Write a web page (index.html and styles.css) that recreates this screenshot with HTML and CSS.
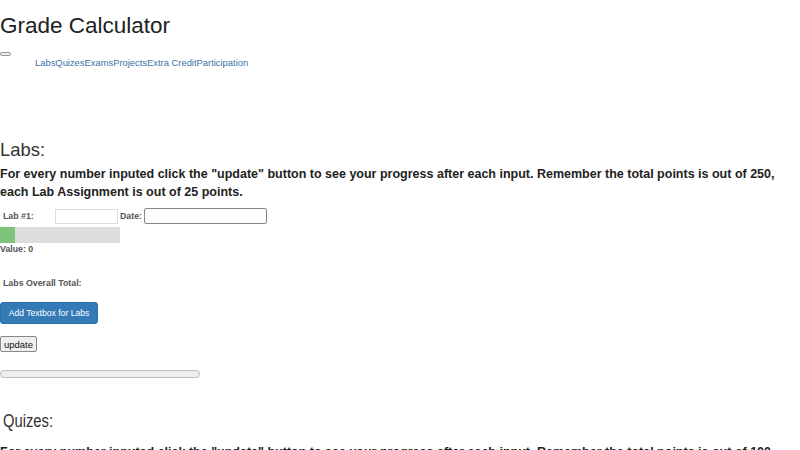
FILE: index.html
```html
<!DOCTYPE html>
<html>
<head>
<meta charset="utf-8">
<link rel="stylesheet" href="styles.css">
</head>
<body>
<h1 class="title">Grade Calculator</h1>
<nav class="nav">
  <button class="toggle" type="button"></button>
  <ul class="links">
    <li><a href="#labs">Labs</a></li>
    <li><a href="#quizes">Quizes</a></li>
    <li><a href="#exams">Exams</a></li>
    <li><a href="#projects">Projects</a></li>
    <li><a href="#extra">Extra Credit</a></li>
    <li><a href="#participation">Participation</a></li>
  </ul>
</nav>

<section class="section" id="labs">
  <h2 class="heading">Labs:</h2>
  <p class="instructions">For every number inputed click the "update" button to see your progress after each input. Remember the total points is out of 250, each Lab Assignment is out of 25 points.</p>
  <div class="entry">
    <label class="lbl lab-lbl">Lab #1:</label>
    <input class="score" type="text">
    <label class="lbl date-lbl">Date:</label>
    <input class="date" type="text">
  </div>
  <div class="meter"><div class="meter-fill" style="width:15px"></div></div>
  <div class="lbl value">Value: 0</div>
  <div class="lbl total">Labs Overall Total:</div>
  <button class="btn-add" type="button">Add Textbox for Labs</button>
  <div class="upd-row"><button class="upd" type="button">update</button></div>
  <div class="overall"></div>
</section>

<section class="section" id="quizes">
  <h2 class="heading heading-q"><span class="narrow">Quizes:</span></h2>
  <p class="instructions instructions-q">For every number inputed click the "update" button to see your progress after each input. Remember the total points is out of 100, each Quiz is out of 10 points.</p>
</section>
</body>
</html>
```
FILE: styles.css
```css
html, body {
  margin: 0;
  padding: 0;
  background: #fff;
  font-family: "Liberation Sans", Arial, sans-serif;
  color: #333;
}
.title {
  font-size: 22.5px;
  font-weight: 400;
  margin: 13px 0 0 0;
  line-height: 26px;
  color: #222;
}
.nav {
  display: flex;
  align-items: flex-start;
  margin-top: 13px;
  height: 60px;
}
.toggle {
  width: 11px;
  height: 4px;
  padding: 0;
  margin: 0;
  border: 1px solid #999;
  border-radius: 2px;
  background: #eee;
}
.links {
  display: flex;
  list-style: none;
  margin: 5px 0 0 24px;
  padding: 0;
  font-size: 9.4px;
  line-height: 11px;
}
.links a {
  color: #3a73a8;
  text-decoration: none;
}
.heading {
  font-size: 18.4px;
  font-weight: 400;
  margin: 27px 0 0 0;
  line-height: 22px;
}
.heading-q {
  margin: 32px 0 0 3px;
  font-size: 18px;
}
.narrow {
  display: inline-block;
  transform: scaleX(0.82);
  transform-origin: left center;
}
.instructions {
  font-size: 12.5px;
  font-weight: 700;
  line-height: 18px;
  margin: 4px 0 0 0;
  color: #222;
}
.instructions-q {
  margin-top: 11px;
}
.entry {
  display: flex;
  align-items: center;
  margin-top: 7px;
  height: 16px;
}
.lbl {
  font-size: 8.8px;
  font-weight: 700;
  color: #555;
}
.lab-lbl {
  margin-left: 3px;
  width: 52px;
}
.score {
  box-sizing: border-box;
  width: 63px;
  height: 15px;
  padding: 0;
  border: 1px solid #ddd;
  margin: 0;
}
.date-lbl {
  margin-left: 2px;
  width: 24px;
}
.date {
  box-sizing: border-box;
  width: 123px;
  height: 16px;
  padding: 0;
  border: 1px solid #888;
  border-radius: 2px;
  margin: 0;
}
.meter {
  width: 120px;
  height: 16px;
  background: #ddd;
  margin-top: 3px;
}
.meter-fill {
  height: 100%;
  background: #7dc57d;
}
.value {
  line-height: 12px;
}
.total {
  margin: 22px 0 0 3px;
  line-height: 12px;
}
.btn-add {
  display: block;
  margin-top: 13px;
  height: 22px;
  width: 98px;
  padding: 0;
  background: #337ab7;
  color: #fff;
  border: 1px solid #2e6da4;
  border-radius: 3px;
  font-family: "Liberation Sans", Arial, sans-serif;
  font-size: 8.6px;
}
.upd-row {
  margin-top: 12px;
  height: 16px;
}
.upd {
  display: block;
  box-sizing: border-box;
  height: 16px;
  width: 37px;
  padding: 0;
  font-family: "Liberation Sans", Arial, sans-serif;
  font-size: 9.5px;
  background: #efefef;
  border: 1px solid #888;
  border-radius: 2px;
  color: #111;
}
.overall {
  box-sizing: border-box;
  width: 200px;
  height: 8px;
  margin-top: 18px;
  background: #eee;
  border: 1px solid #bbb;
  border-radius: 4px;
}
```
